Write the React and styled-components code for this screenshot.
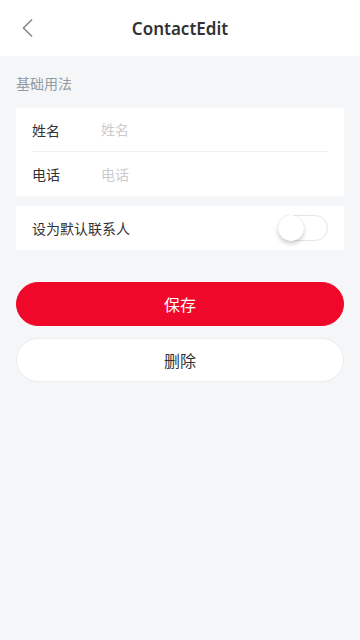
import React, { useState } from 'react';
import styled, { createGlobalStyle } from 'styled-components';

const BG = '#f5f6f8';
const RED = '#f0082a';
const FONT = '"Noto Sans", "Noto Sans CJK SC", sans-serif';

const GlobalStyle = createGlobalStyle`
    html, body {
        margin: 0;
        padding: 0;
        background: ${BG};
        font-family: ${FONT};
    }
    * { box-sizing: border-box; }
`;

const Page = styled.div`
    min-height: 640px;
    background: ${BG};
    display: flex;
    flex-direction: column;
`;

const NavBar = styled.header`
    height: 56px;
    background: #fff;
    display: flex;
    align-items: center;
    justify-content: center;
    position: relative;
`;

const BackButton = styled.button`
    position: absolute;
    left: 14px;
    top: 14px;
    width: 28px;
    height: 28px;
    border: none;
    background: none;
    padding: 0;
    display: flex;
    align-items: center;
    justify-content: center;
`;

const Title = styled.h1`
    margin: 0;
    font-size: 17px;
    font-weight: 600;
    color: #323233;
`;

const Content = styled.main`
    padding: 0 16px;
    display: flex;
    flex-direction: column;
`;

const SectionTitle = styled.h2`
    margin: 0;
    padding: 18px 0 14px;
    font-size: 14px;
    font-weight: 400;
    color: #909ca4;
    line-height: 20px;
`;

const Card = styled.div`
    background: #fff;
    margin-bottom: ${p => p.$gap || 0}px;
`;

const Row = styled.div`
    height: 44px;
    margin: 0 16px;
    display: flex;
    align-items: center;
    justify-content: space-between;
    border-bottom: ${p => (p.$divider ? '1px solid #f0f0f0' : 'none')};
`;

const Label = styled.label`
    width: 69px;
    flex-shrink: 0;
    font-size: 14px;
    color: #333;
`;

const Input = styled.input`
    flex: 1;
    border: none;
    outline: none;
    padding: 0;
    font-family: ${FONT};
    font-size: 14px;
    color: #333;
    background: transparent;
    &::placeholder { color: #cccccc; }
`;

const RowText = styled.span`
    font-size: 14px;
    color: #333;
`;

const SwitchTrack = styled.button`
    width: 50px;
    height: 26px;
    border-radius: 13px;
    border: 1px solid #e5e5e5;
    background: ${p => (p.$on ? RED : '#fff')};
    padding: 0;
    position: relative;
    cursor: pointer;
`;

const SwitchThumb = styled.span`
    position: absolute;
    top: -1px;
    left: ${p => (p.$on ? '23px' : '-1px')};
    width: 26px;
    height: 26px;
    border-radius: 50%;
    background: #fff;
    box-shadow: 0 3px 4px rgba(0, 0, 0, 0.18), 0 0 1px rgba(0, 0, 0, 0.15);
`;

const Actions = styled.div`
    display: flex;
    flex-direction: column;
    gap: 12px;
    margin-top: 32px;
`;

const Button = styled.button`
    height: 44px;
    border-radius: 22px;
    font-family: ${FONT};
    font-size: 16px;
    cursor: pointer;
    background: ${p => (p.$primary ? RED : '#fff')};
    color: ${p => (p.$primary ? '#fff' : '#333')};
    border: 1px solid ${p => (p.$primary ? RED : '#ebedf0')};
`;

function BackIcon() {
    return (
        <svg width="14" height="20" viewBox="0 0 14 20" fill="none">
            <path d="M11 1.5L2.5 10L11 18.5" stroke="#8a8a8a" strokeWidth="1.6" />
        </svg>
    );
}

export default function App() {
    const [isDefault, setDefault] = useState(false);
    return (
        <Page>
            <GlobalStyle />
            <NavBar>
                <BackButton aria-label="back"><BackIcon /></BackButton>
                <Title>ContactEdit</Title>
            </NavBar>
            <Content>
                <SectionTitle>基础用法</SectionTitle>
                <Card $gap={10}>
                    <Row $divider>
                        <Label>姓名</Label>
                        <Input placeholder="姓名" />
                    </Row>
                    <Row>
                        <Label>电话</Label>
                        <Input placeholder="电话" />
                    </Row>
                </Card>
                <Card>
                    <Row>
                        <RowText>设为默认联系人</RowText>
                        <SwitchTrack $on={isDefault} onClick={() => setDefault(!isDefault)}>
                            <SwitchThumb $on={isDefault} />
                        </SwitchTrack>
                    </Row>
                </Card>
                <Actions>
                    <Button $primary>保存</Button>
                    <Button>删除</Button>
                </Actions>
            </Content>
        </Page>
    );
}
